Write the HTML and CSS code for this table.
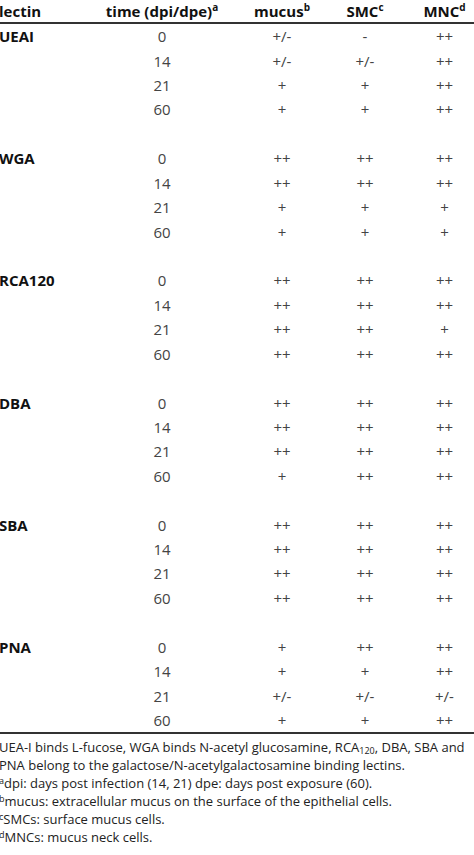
FILE: index.html
```html
<!DOCTYPE html>
<html>
<head>
<meta charset="utf-8">
<link rel="stylesheet" href="styles.css">
</head>
<body>
<div class="page">
<table class="lectins">
<colgroup>
<col class="c-lectin"><col class="c-time"><col class="c-mucus"><col class="c-smc"><col class="c-mnc">
</colgroup>
<thead>
<tr><th class="name">lectin</th><th>time (dpi/dpe)<sup>a</sup></th><th>mucus<sup>b</sup></th><th>SMC<sup>c</sup></th><th>MNC<sup>d</sup></th></tr>
</thead>
<tbody>
<tr><td class="name">UEAI</td><td>0</td><td>+/-</td><td>-</td><td>++</td></tr>
<tr><td></td><td>14</td><td>+/-</td><td>+/-</td><td>++</td></tr>
<tr><td></td><td>21</td><td>+</td><td>+</td><td>++</td></tr>
<tr><td></td><td>60</td><td>+</td><td>+</td><td>++</td></tr>
<tr class="gap"><td colspan="5"></td></tr>
<tr><td class="name">WGA</td><td>0</td><td>++</td><td>++</td><td>++</td></tr>
<tr><td></td><td>14</td><td>++</td><td>++</td><td>++</td></tr>
<tr><td></td><td>21</td><td>+</td><td>+</td><td>+</td></tr>
<tr><td></td><td>60</td><td>+</td><td>+</td><td>+</td></tr>
<tr class="gap"><td colspan="5"></td></tr>
<tr><td class="name">RCA120</td><td>0</td><td>++</td><td>++</td><td>++</td></tr>
<tr><td></td><td>14</td><td>++</td><td>++</td><td>++</td></tr>
<tr><td></td><td>21</td><td>++</td><td>++</td><td>+</td></tr>
<tr><td></td><td>60</td><td>++</td><td>++</td><td>++</td></tr>
<tr class="gap"><td colspan="5"></td></tr>
<tr><td class="name">DBA</td><td>0</td><td>++</td><td>++</td><td>++</td></tr>
<tr><td></td><td>14</td><td>++</td><td>++</td><td>++</td></tr>
<tr><td></td><td>21</td><td>++</td><td>++</td><td>++</td></tr>
<tr><td></td><td>60</td><td>+</td><td>++</td><td>++</td></tr>
<tr class="gap"><td colspan="5"></td></tr>
<tr><td class="name">SBA</td><td>0</td><td>++</td><td>++</td><td>++</td></tr>
<tr><td></td><td>14</td><td>++</td><td>++</td><td>++</td></tr>
<tr><td></td><td>21</td><td>++</td><td>++</td><td>++</td></tr>
<tr><td></td><td>60</td><td>++</td><td>++</td><td>++</td></tr>
<tr class="gap"><td colspan="5"></td></tr>
<tr><td class="name">PNA</td><td>0</td><td>+</td><td>++</td><td>++</td></tr>
<tr><td></td><td>14</td><td>+</td><td>+</td><td>++</td></tr>
<tr><td></td><td>21</td><td>+/-</td><td>+/-</td><td>+/-</td></tr>
<tr><td></td><td>60</td><td>+</td><td>+</td><td>++</td></tr>
</tbody>
</table>
<div class="notes">
<p>UEA-I binds L-fucose, WGA binds N-acetyl glucosamine, RCA<sub>120</sub>, DBA, SBA and PNA belong to the galactose/N-acetylgalactosamine binding lectins.</p>
<p><sup>a</sup>dpi: days post infection (14, 21) dpe: days post exposure (60).</p>
<p><sup>b</sup>mucus: extracellular mucus on the surface of the epithelial cells.</p>
<p><sup>c</sup>SMCs: surface mucus cells.</p>
<p><sup>d</sup>MNCs: mucus neck cells.</p>
</div>
</div>
</body>
</html>
```
FILE: styles.css
```css
html, body {
  margin: 0;
  padding: 0;
  background: #fff;
}
body {
  font-family: "Open Sans", "Noto Sans", sans-serif;
  color: #3a3a3a;
  width: 474px;
  overflow: hidden;
}
.page {
  margin-left: -1px;
  width: 476px;
}
.lectins {
  border-collapse: collapse;
  table-layout: fixed;
  width: 476px;
}
.c-lectin { width: 77px; }
.c-time { width: 172px; }
.c-mucus { width: 68px; }
.c-smc { width: 98px; }
.c-mnc { width: 61px; }
.lectins th {
  font-weight: 700;
  font-size: 15px;
  color: #111;
  height: 22px;
  padding: 0;
  text-align: center;
  border-bottom: 2px solid #333;
  line-height: 18px;
  vertical-align: middle;
}
.lectins th.name, .lectins td.name {
  text-align: left;
}
.lectins td {
  font-size: 15px;
  height: 24.43px;
  padding: 0;
  text-align: center;
  line-height: 18px;
  vertical-align: middle;
  color: #444;
}
.lectins td.name {
  font-weight: 700;
  color: #111;
}
.lectins tbody tr:last-child td {
  border-bottom: 2px solid #333;
}
.lectins sup {
  font-size: 10px;
  line-height: 0;
  vertical-align: 6px;
}
.notes {
  padding-top: 4px;
  font-size: 13px;
  line-height: 18px;
  color: #222;
}
.notes p {
  margin: 0;
}
.notes sup {
  font-size: 9px;
  line-height: 0;
  vertical-align: 4px;
}
.notes sub {
  font-size: 9px;
  line-height: 0;
  vertical-align: -2px;
}
```
